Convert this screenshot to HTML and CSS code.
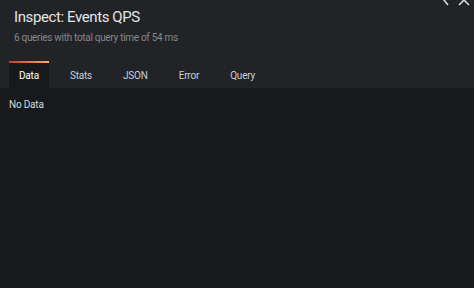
FILE: index.html
```html
<!DOCTYPE html>
<html lang="en">
<head>
    <meta charset="UTF-8">
    <meta name="viewport" content="width=device-width, initial-scale=1.0">
    <title>Inspect: Events QPS</title>
    <link rel="stylesheet" href="styles.css">
</head>
<body>
    <div class="drawer">
        <div class="drawer-header">
            <div class="header-actions">
                <button class="icon-button" aria-label="Expand">
                    <svg width="10" height="12" viewBox="0 0 10 12"><path d="M7 1 L3 6 L7 11" fill="none" stroke="#d8d9da" stroke-width="1.6"/></svg>
                </button>
                <button class="icon-button" aria-label="Close">
                    <svg width="12" height="12" viewBox="0 0 12 12"><path d="M1 1 L11 11 M11 1 L1 11" fill="none" stroke="#d8d9da" stroke-width="1.6"/></svg>
                </button>
            </div>
            <h1 class="drawer-title">Inspect: Events QPS</h1>
            <div class="drawer-subtitle">6 queries with total query time of 54 ms</div>
            <div class="tabs">
                <div class="tab active">Data</div>
                <div class="tab">Stats</div>
                <div class="tab">JSON</div>
                <div class="tab">Error</div>
                <div class="tab">Query</div>
            </div>
        </div>
        <div class="drawer-content">No Data</div>
    </div>
</body>
</html>
```

FILE: styles.css
```css
body {
    margin: 0;
    font-family: Roboto, "Liberation Sans", sans-serif;
    background-color: #18191d;
    color: #d8d9da;
}

.drawer {
    display: flex;
    flex-direction: column;
    height: 288px;
}

.drawer-header {
    position: relative;
    background-color: #222327;
    padding: 7px 0 0 9px;
}

.header-actions {
    position: absolute;
    top: -6px;
    right: 4px;
    display: flex;
    gap: 6px;
}

.icon-button {
    background: none;
    border: none;
    padding: 0;
    width: 12px;
    height: 12px;
    display: flex;
    align-items: center;
    justify-content: center;
}

.drawer-title {
    margin: 0 0 0 5px;
    font-size: 15px;
    letter-spacing: -0.4px;
    font-weight: 400;
    line-height: 20px;
    color: #e4e5e7;
}

.drawer-subtitle {
    margin: 4px 0 0 5px;
    font-size: 10px;
    letter-spacing: -0.3px;
    line-height: 14px;
    color: #84878c;
}

.tabs {
    display: flex;
    margin-top: 16px;
}

.tab {
    padding: 0 10px;
    height: 25px;
    line-height: 25px;
    font-size: 10px;
    letter-spacing: -0.2px;
    color: #c7d0d9;
    margin-right: 11px;
    border-top: 2px solid transparent;
}

.tab.active {
    background-color: #18191d;
    border-image: linear-gradient(90deg, #c23a2a, #f5b06a) 1;
    border-top: 2px solid;
    color: #ffffff;
}

.drawer-content {
    flex: 1;
    padding: 10px 9px;
    font-size: 10px;
    letter-spacing: -0.2px;
    line-height: 14px;
    color: #d8d9da;
}
```
